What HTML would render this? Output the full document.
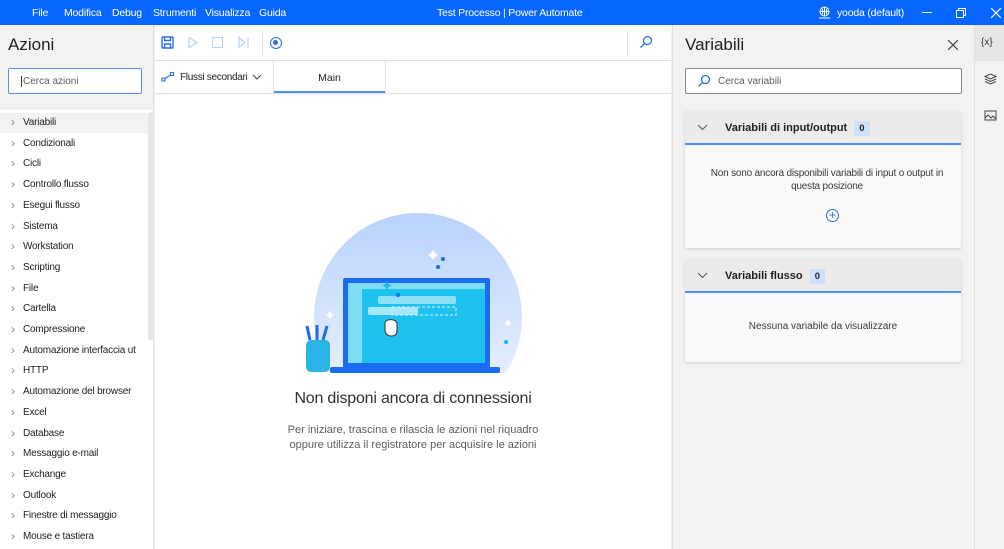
<!DOCTYPE html>
<html><head><meta charset="utf-8"><style>
*{box-sizing:border-box;margin:0;padding:0}
body{width:1004px;height:549px;overflow:hidden;font-family:"Liberation Sans",sans-serif;background:#f3f2f1;position:relative;color:#201f1e}
.abs{position:absolute}
.tb{left:0;top:0;width:1004px;height:25px;background:#0766ff;color:#fff;font-size:10.5px;letter-spacing:-0.2px}
.tb span{position:absolute;top:7px}
.left{left:0;top:25px;width:154px;height:524px;background:#fff;border-right:1px solid #e1dfdd}
.item{position:absolute;left:0;width:148px;height:20px;font-size:10px;line-height:20px;padding-left:23px;color:#201f1e;white-space:nowrap;overflow:hidden;letter-spacing:-0.2px}
.item:before{content:"›";position:absolute;left:11px;top:-1px;color:#8a8886;font-size:12px}
.center{left:155px;top:25px;width:516px;height:524px;background:#fff}
.right{left:672px;top:25px;width:302px;height:524px;background:#f3f2f1;border-left:1px solid #e1dfdd}
.rail{left:974px;top:25px;width:30px;height:524px;background:#f3f2f1;border-left:1px solid #e1dfdd}
.card{position:absolute;left:12px;width:276px;background:#faf9f8;box-shadow:0 1px 3px rgba(0,0,0,.15);border-radius:2px}
.ch{height:34px;background:#edebe9;border-bottom:2px solid #4f8ff7;position:relative;font-size:11px}
.badge{display:inline-block;background:#cfe0fc;padding:2px 5px;font-size:9.5px;margin-left:4px;font-weight:bold}
</style></head><body>
<div class="abs tb">
<span style="left:32px">File</span><span style="left:64px">Modifica</span><span style="left:112px">Debug</span><span style="left:153px">Strumenti</span><span style="left:205px">Visualizza</span><span style="left:259px">Guida</span>
<span style="left:437px">Test Processo | Power Automate</span>
<svg style="position:absolute;left:818px;top:6px" width="13" height="13" viewBox="0 0 13 13" fill="none" stroke="#fff" stroke-width="1"><circle cx="6.5" cy="5.5" r="4.5"/><path d="M2 5.5h9M6.5 1v9M4 2.5c1 2 1 4 0 6M9 2.5c-1 2-1 4 0 6M1 12h11"/></svg>
<span style="left:837px">yooda (default)</span>
<div class="abs" style="left:922px;top:12px;width:10px;height:1px;background:#fff"></div>
<svg style="position:absolute;left:956px;top:8px" width="10" height="10" fill="none" stroke="#fff"><rect x="0.5" y="2.5" width="7" height="7"/><path d="M2.5 2.5V.5h7v7h-2"/></svg>
<svg style="position:absolute;left:991px;top:8px" width="10" height="10" stroke="#fff" stroke-width="1.2"><path d="M0 0l10 10M10 0L0 10"/></svg>
</div>
<div class="abs left">
<div class="abs" style="left:0;top:0;width:153px;height:85px;background:#f3f2f1"></div>
<div class="abs" style="left:8px;top:10px;font-size:17px">Azioni</div>
<div class="abs" style="left:8px;top:43px;width:134px;height:26px;background:#fff;border:1px solid #4f8ff7;border-radius:2px;font-size:10px;color:#605e5c;padding:7px 0 0 12px"><span style="border-left:1px solid #333;padding-left:1px">Cerca azioni</span></div>
<div class="abs" style="left:0;top:88px;width:148px;height:20px;background:#f3f2f1"></div>
<div class="abs" style="left:148px;top:87px;width:6px;height:228px;background:#e8e6e4;border-radius:3px"></div>
<div class="item" style="top:88px">Variabili</div>
<div class="item" style="top:108.7px">Condizionali</div>
<div class="item" style="top:129.4px">Cicli</div>
<div class="item" style="top:150.1px">Controllo flusso</div>
<div class="item" style="top:170.8px">Esegui flusso</div>
<div class="item" style="top:191.5px">Sistema</div>
<div class="item" style="top:212.2px">Workstation</div>
<div class="item" style="top:232.9px">Scripting</div>
<div class="item" style="top:253.6px">File</div>
<div class="item" style="top:274.3px">Cartella</div>
<div class="item" style="top:295px">Compressione</div>
<div class="item" style="top:315.7px">Automazione interfaccia ut</div>
<div class="item" style="top:336.4px">HTTP</div>
<div class="item" style="top:357.1px">Automazione del browser</div>
<div class="item" style="top:377.8px">Excel</div>
<div class="item" style="top:398.5px">Database</div>
<div class="item" style="top:419.2px">Messaggio e-mail</div>
<div class="item" style="top:439.9px">Exchange</div>
<div class="item" style="top:460.6px">Outlook</div>
<div class="item" style="top:481.3px">Finestre di messaggio</div>
<div class="item" style="top:502px">Mouse e tastiera</div>
</div>
<div class="abs center">
<svg class="abs" style="left:6px;top:11px" width="13" height="13" fill="none" stroke="#2b6fe0" stroke-width="1.4"><rect x="1" y="1" width="11" height="11" rx="1"/><path d="M3.5 1v3.5h6V1M3.5 12V8h6v4"/></svg>
<svg class="abs" style="left:32px;top:11px" width="12" height="13" fill="none" stroke="#b7cffa" stroke-width="1.2"><path d="M2 1.5l8 5-8 5z"/></svg>
<div class="abs" style="left:57px;top:12px;width:11px;height:11px;border:1.3px solid #b7cffa"></div>
<svg class="abs" style="left:82px;top:11px" width="13" height="13" fill="none" stroke="#b7cffa" stroke-width="1.2"><path d="M2 1.5l6 5-6 5zM11 1.5v10"/></svg>
<div class="abs" style="left:107px;top:5px;width:1px;height:26px;background:#e1dfdd"></div>
<div class="abs" style="left:115px;top:12px;width:12px;height:12px;border:1.4px solid #2b6fe0;border-radius:50%"><div style="margin:2px;width:5px;height:5px;background:#2b6fe0;border-radius:50%"></div></div>
<div class="abs" style="left:472px;top:5px;width:1px;height:26px;background:#e1dfdd"></div>
<svg class="abs" style="left:484px;top:10px" width="14" height="14" fill="none" stroke="#2b6fe0" stroke-width="1.3"><circle cx="8.5" cy="5.5" r="4"/><path d="M5.5 8.5L1.5 12.5"/></svg>
<div class="abs" style="left:0;top:35px;width:516px;height:1px;background:#e1dfdd"></div>
<svg class="abs" style="left:6px;top:46px" width="14" height="12" fill="none" stroke="#2b6fe0" stroke-width="1.1"><rect x="1" y="7" width="3" height="3"/><rect x="9.5" y="1.5" width="3" height="3"/><path d="M4 7.5L9.5 4"/></svg>
<div class="abs" style="left:25px;top:47px;font-size:10px;letter-spacing:-0.3px">Flussi secondari</div>
<svg class="abs" style="left:97px;top:49px" width="10" height="7" fill="none" stroke="#444"><path d="M1 1l4 4 4-4"/></svg>
<div class="abs" style="left:118px;top:36px;width:1px;height:32px;background:#e1dfdd"></div>
<div class="abs" style="left:230px;top:36px;width:1px;height:32px;background:#e1dfdd"></div>
<div class="abs" style="left:119px;top:47px;width:111px;text-align:center;font-size:10.5px">Main</div>
<div class="abs" style="left:119px;top:66px;width:111px;height:2px;background:#4f8ff7"></div>
<div class="abs" style="left:0;top:68px;width:516px;height:1px;background:#e1dfdd"></div>
<svg class="abs" style="left:125px;top:180px" width="260" height="175" viewBox="0 0 260 175">
<defs><linearGradient id="g" x1="0" y1="0" x2="0" y2="1"><stop offset="0" stop-color="#b9d3fb"/><stop offset="1" stop-color="#f2f6fe"/></linearGradient></defs>
<circle cx="138" cy="112" r="104" fill="url(#g)"/>
<rect x="0" y="168" width="260" height="10" fill="#fff"/>
<rect x="63" y="73" width="147" height="90" rx="2" fill="#1a6df0"/>
<rect x="68" y="78" width="137" height="80" fill="#1fc2ee"/>
<rect x="68" y="78" width="137" height="6" fill="#7fdcf5"/>
<rect x="68" y="84" width="14" height="74" fill="#7fdcf5"/>
<rect x="98" y="91" width="78" height="8" rx="2" fill="#8ee0f7"/>
<rect x="88" y="102" width="50" height="8" rx="2" fill="#a6e8fa"/>
<rect x="112" y="102" width="64" height="8" fill="none" stroke="#d8f5fd" stroke-dasharray="3 2"/>
<path d="M105 118c0-4 10-5 12 0v8c0 3-2 5-6 5s-6-3-6-6z" fill="#fff" stroke="#333"/>
<rect x="50" y="162" width="170" height="6" rx="2" fill="#1a6df0"/>
<rect x="26" y="135" width="24" height="32" rx="5" fill="#2bb5e6"/>
<path d="M30 135l-3-14M37 135v-15M43 135l4-14" stroke="#1a6df0" stroke-width="3"/>
<path d="M153 45l2 3 3 2-3 2-2 3-2-3-3-2 3-2z" fill="#fff"/>
<path d="M50 106l1.5 2.5 2.5 1.5-2.5 1.5-1.5 2.5-1.5-2.5-2.5-1.5 2.5-1.5z" fill="#fff"/>
<path d="M107 76l1.5 3 3 1.5-3 1.5-1.5 3-1.5-3-3-1.5 3-1.5z" fill="#16b6f0"/>
<circle cx="118" cy="90" r="2" fill="#1a6df0"/><circle cx="158" cy="62" r="2" fill="#1a6df0"/><circle cx="163" cy="54" r="2" fill="#1a6df0"/>
<circle cx="228" cy="118" r="2.5" fill="#fff"/><circle cx="226" cy="137" r="2" fill="#16b6f0"/>
</svg>
<div class="abs" style="left:0;top:365px;width:516px;text-align:center;font-size:16px;color:#323130;letter-spacing:-0.2px">Non disponi ancora di connessioni</div>
<div class="abs" style="left:0;top:398px;width:516px;text-align:center;font-size:11px;color:#605e5c;line-height:15px">Per iniziare, trascina e rilascia le azioni nel riquadro<br>oppure utilizza il registratore per acquisire le azioni</div>
</div>
<div class="abs right">
<div class="abs" style="left:12px;top:10px;font-size:17px">Variabili</div>
<svg class="abs" style="left:275px;top:15px" width="10" height="10" stroke="#444" stroke-width="1.2"><path d="M0 0l10 10M10 0L0 10"/></svg>
<div class="abs" style="left:12px;top:43px;width:277px;height:26px;background:#fff;border:1px solid #8a8886;border-radius:2px;font-size:10px;color:#605e5c;padding:7px 0 0 32px">Cerca variabili</div>
<svg class="abs" style="left:24px;top:49px" width="14" height="14" fill="none" stroke="#2b6fe0" stroke-width="1.3"><circle cx="8.5" cy="5.5" r="4"/><path d="M5.5 8.5L1.5 12.5"/></svg>
<div class="card" style="top:86px;height:137px">
<div class="ch"><svg class="abs" style="left:12px;top:13px" width="11" height="7" fill="none" stroke="#555"><path d="M1 1l4.5 4.5L10 1"/></svg><span class="abs" style="left:40px;top:10px;color:#201f1e;font-size:11px;font-weight:bold">Variabili di input/output <span class="badge">0</span></span></div>
<div style="text-align:center;font-size:10px;color:#3b3a39;padding:22px 10px 0 18px;line-height:13px;letter-spacing:-0.2px">Non sono ancora disponibili variabili di input o output in questa posizione</div>
<div class="abs" style="left:141px;top:98px;width:13px;height:13px;border:1.2px solid #2b6fe0;border-radius:50%;color:#2b6fe0;font-size:12px;line-height:10px;text-align:center">+</div>
</div>
<div class="card" style="top:234px;height:103px">
<div class="ch"><svg class="abs" style="left:12px;top:13px" width="11" height="7" fill="none" stroke="#555"><path d="M1 1l4.5 4.5L10 1"/></svg><span class="abs" style="left:40px;top:10px;font-size:11px;font-weight:bold">Variabili flusso <span class="badge">0</span></span></div>
<div style="text-align:center;font-size:10px;color:#3b3a39;padding-top:28px">Nessuna variabile da visualizzare</div>
</div>
</div>
<div class="abs rail">
<div class="abs" style="left:0;top:0;width:30px;height:36px;background:#e8e6e4"></div>
<div class="abs" style="left:6px;top:12px;font-size:10px;color:#333">{x}</div>
<svg class="abs" style="left:9px;top:48px" width="13" height="12" fill="none" stroke="#444"><path d="M6.5 1L12 3.5 6.5 6 1 3.5zM1 6l5.5 2.5L12 6M1 8.5L6.5 11 12 8.5"/></svg>
<svg class="abs" style="left:9px;top:85px" width="13" height="11" fill="none" stroke="#444"><rect x="1" y="1" width="11" height="9"/><path d="M1 8l3-3 3 3 2-2 3 3"/></svg>
</div>
</body></html>
